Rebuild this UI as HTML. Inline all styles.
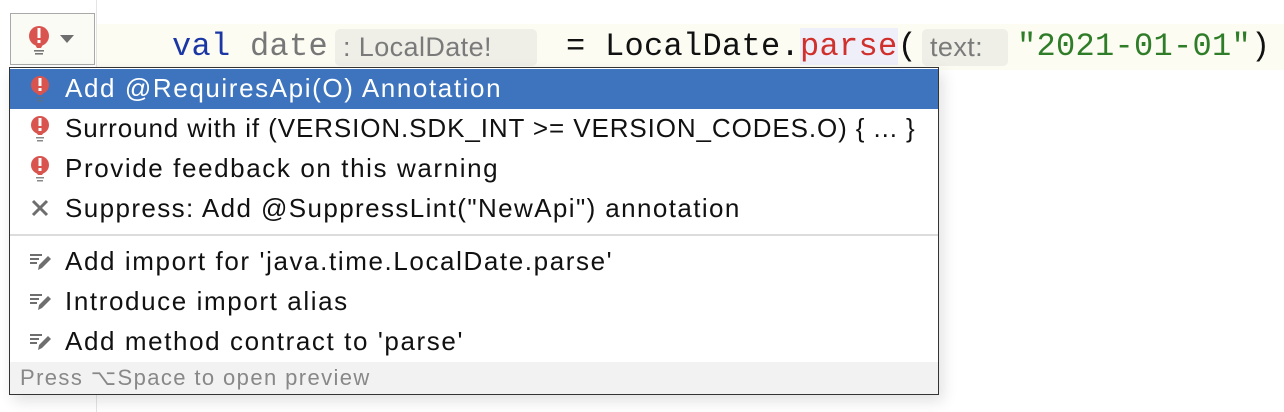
<!DOCTYPE html>
<html><head><style>
body{margin:0;width:1284px;height:412px;background:#fff;position:relative;overflow:hidden;font-family:"Liberation Sans",sans-serif}
.gut{position:absolute;left:96px;top:0;width:1px;height:412px;background:#e4e4e4}
.cur{position:absolute;left:97px;top:24px;width:1187px;height:46px;background:#fcfcf3}
.code{position:absolute;top:27px;font-family:"Liberation Mono",monospace;font-size:32px;letter-spacing:0.3px;line-height:40px;white-space:pre}
.hint{position:absolute;top:29px;height:37px;background:#efefe8;border-radius:5px;color:#7a7a7a;font-size:27px;letter-spacing:0.4px;line-height:37px;white-space:pre}
.btn{position:absolute;left:10px;top:13px;width:85px;height:52px;border:1px solid #a9a9a9;box-sizing:border-box;background:#fbfbf5}
.pop{position:absolute;left:9px;top:67px;width:930px;height:328px;border:1px solid #333;box-sizing:border-box;background:#fff;box-shadow:4px 6px 14px rgba(0,0,0,.12)}
.row{position:absolute;left:0;width:928px;height:40px;font-size:26px;letter-spacing:1.6px;line-height:38px;color:#111;white-space:pre}
.row span{position:absolute;left:55px}
.row svg{position:absolute;left:18px;top:7px}
.sel{background:#3d74bd;color:#fff}
.foot{position:absolute;left:0;top:294px;width:928px;height:32px;background:#f2f2f2;color:#888;font-size:22px;letter-spacing:1.4px;line-height:32px;padding-left:10px;box-sizing:border-box}
</style></head><body>
<div class="gut"></div>
<div class="cur"></div>
<div class="btn">
<svg width="85" height="52" style="position:absolute;left:-1px;top:-1px"><circle cx="29" cy="23" r="10" fill="#d9534f"/><path d="M23 28 L27 35 H31 L35 28Z" fill="#d9534f"/><rect x="27.5" y="15" width="3" height="10" fill="#fff"/><rect x="27.5" y="27" width="3" height="3" fill="#fff"/><rect x="24" y="37" width="10" height="1.6" fill="#777"/><rect x="25" y="40" width="8" height="1.6" fill="#777"/><path d="M50 22 H64 L57 30Z" fill="#6e6e6e"/></svg>
</div>
<div class="code" style="left:172px;color:#1b37a5">val</div>
<div class="code" style="left:250px;color:#777">date</div>
<div class="hint" style="left:335px;width:202px;padding-left:8px;box-sizing:border-box">: LocalDate!</div>
<div class="code" style="left:566px;color:#111">= LocalDate.<span style="color:#d0312d;background:#efeffa">parse</span>(</div>
<div class="hint" style="left:922px;width:86px;padding-left:8px;box-sizing:border-box">text:</div>
<div class="code" style="left:1017px;color:#2f7d28">"2021-01-01"<span style="color:#111">)</span></div>
<div class="pop">
<div class="row sel" style="top:1px"><svg width="26" height="26"><circle cx="12" cy="9" r="9" fill="#d9534f"/><path d="M6 13 L10 19 H14 L18 13Z" fill="#d9534f"/><rect x="10.5" y="2" width="3" height="8" fill="#fff"/><rect x="10.5" y="12" width="3" height="3" fill="#fff"/><rect x="8" y="21" width="8" height="1.5" fill="#5a6f8c"/><rect x="9" y="24" width="6" height="1.5" fill="#5a6f8c"/></svg><span>Add @RequiresApi(O) Annotation</span></div>
<div class="row" style="top:41px;letter-spacing:0.9px"><svg width="26" height="26"><circle cx="12" cy="9" r="9" fill="#d9534f"/><path d="M6 13 L10 19 H14 L18 13Z" fill="#d9534f"/><rect x="10.5" y="2" width="3" height="8" fill="#fff"/><rect x="10.5" y="12" width="3" height="3" fill="#fff"/><rect x="8" y="21" width="8" height="1.5" fill="#888"/><rect x="9" y="24" width="6" height="1.5" fill="#888"/></svg><span>Surround with if (VERSION.SDK_INT &gt;= VERSION_CODES.O) { ... }</span></div>
<div class="row" style="top:81px"><svg width="26" height="26"><circle cx="12" cy="9" r="9" fill="#d9534f"/><path d="M6 13 L10 19 H14 L18 13Z" fill="#d9534f"/><rect x="10.5" y="2" width="3" height="8" fill="#fff"/><rect x="10.5" y="12" width="3" height="3" fill="#fff"/><rect x="8" y="21" width="8" height="1.5" fill="#888"/><rect x="9" y="24" width="6" height="1.5" fill="#888"/></svg><span>Provide feedback on this warning</span></div>
<div class="row" style="top:121px;letter-spacing:1.4px"><svg width="26" height="26"><path d="M5 5 L19 19 M19 5 L5 19" stroke="#6e6e6e" stroke-width="3"/></svg><span>Suppress: Add @SuppressLint("NewApi") annotation</span></div>
<div style="position:absolute;left:0;top:166px;width:928px;height:2px;background:#dcdcdc"></div>
<div class="row" style="top:174px"><svg width="26" height="26"><path d="M2 6 H14 M2 10 H11 M2 14 H9" stroke="#6e6e6e" stroke-width="2"/><path d="M10 21 L11 16 L20 7 L23 10 L14 19Z" fill="#6e6e6e"/></svg><span>Add import for 'java.time.LocalDate.parse'</span></div>
<div class="row" style="top:214px"><svg width="26" height="26"><path d="M2 6 H14 M2 10 H11 M2 14 H9" stroke="#6e6e6e" stroke-width="2"/><path d="M10 21 L11 16 L20 7 L23 10 L14 19Z" fill="#6e6e6e"/></svg><span>Introduce import alias</span></div>
<div class="row" style="top:254px"><svg width="26" height="26"><path d="M2 6 H14 M2 10 H11 M2 14 H9" stroke="#6e6e6e" stroke-width="2"/><path d="M10 21 L11 16 L20 7 L23 10 L14 19Z" fill="#6e6e6e"/></svg><span>Add method contract to 'parse'</span></div>
<div class="foot">Press ⌥Space to open preview</div>
</div>
</body></html>
